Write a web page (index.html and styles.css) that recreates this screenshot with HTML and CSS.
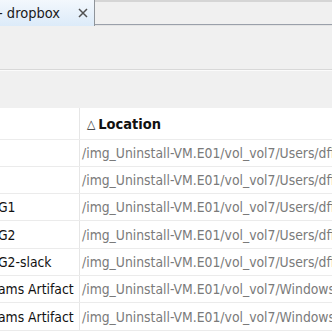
FILE: index.html
```html
<!DOCTYPE html>
<html>
<head>
<meta charset="utf-8">
<link rel="stylesheet" href="styles.css">
</head>
<body>
<div class="tabbar">
  <div class="tab">
    <span class="tab-title">- dropbox</span>
    <svg class="tab-close" width="10" height="10" viewBox="0 0 10 10"><path d="M1 1L9 9M9 1L1 9" stroke="#505050" stroke-width="1.5" fill="none"/></svg>
  </div>
  <div class="tab-rest"></div>
</div>
<div class="toolbar"></div>
<div class="subbar"></div>
<div class="table">
  <div class="row head">
    <div class="cell name"></div>
    <div class="cell loc"><span class="sort">△</span>Location</div>
  </div>
  <div class="row"><div class="cell name"></div><div class="cell loc">/img_Uninstall-VM.E01/vol_vol7/Users/dfir</div></div>
  <div class="row"><div class="cell name"></div><div class="cell loc">/img_Uninstall-VM.E01/vol_vol7/Users/dfir</div></div>
  <div class="row"><div class="cell name">G1</div><div class="cell loc">/img_Uninstall-VM.E01/vol_vol7/Users/dfir</div></div>
  <div class="row"><div class="cell name">G2</div><div class="cell loc">/img_Uninstall-VM.E01/vol_vol7/Users/dfir</div></div>
  <div class="row"><div class="cell name">G2-slack</div><div class="cell loc">/img_Uninstall-VM.E01/vol_vol7/Users/dfir</div></div>
  <div class="row"><div class="cell name">ams Artifact</div><div class="cell loc">/img_Uninstall-VM.E01/vol_vol7/Windows_</div></div>
  <div class="row"><div class="cell name">ams Artifact</div><div class="cell loc">/img_Uninstall-VM.E01/vol_vol7/Windows_</div></div>
</div>
</body>
</html>
```
FILE: styles.css
```css
html, body {
  margin: 0;
  padding: 0;
}
body {
  width: 332px;
  height: 332px;
  overflow: hidden;
  background: #f0f0f0;
  font-family: "DejaVu Sans Condensed", "DejaVu Sans", sans-serif;
  font-size: 13.8px;
  color: #1a1a1a;
}
.tabbar {
  display: flex;
  height: 25px;
}
.tab {
  width: 95px;
  flex: none;
  display: flex;
  align-items: center;
  background: linear-gradient(#f3f8fd, #dcebf9);
  border-right: 1px solid #8f949a;
  box-sizing: border-box;
  height: 26px;
  overflow: hidden;
  white-space: nowrap;
}
.tab-title {
  margin-left: -2px;
  font-size: 14.5px;
  color: #1a1a1a;
  padding-bottom: 1px;
}
.tab-close {
  margin-left: auto;
  margin-right: 6px;
  flex: none;
}
.tab-rest {
  flex: 1;
  border-top: 2px solid #d5d5d5;
  border-bottom: 1px solid #9aa0aa;
  background: #f0f0f0;
  box-sizing: border-box;
  height: 25px;
}
.toolbar {
  height: 43px;
  border-top: 1px solid #e4e4e4;
  border-bottom: 1px solid #d8d8d8;
  background: #f0f0f0;
}
.subbar {
  height: 37px;
  border-top: 1px solid #fbfbfb;
  background: #f0f0f0;
}
.table {
  background: #fff;
  height: 300px;
  overflow: hidden;
}
.row {
  display: flex;
  height: 27.33px;
  border-bottom: 1px solid #ebebeb;
  box-sizing: border-box;
  white-space: nowrap;
}
.row.head {
  height: 31.5px;
  border-bottom: 1px solid #ececec;
}
.cell {
  display: flex;
  align-items: center;
  overflow: hidden;
}
.cell.name {
  width: 79px;
  flex: none;
  border-right: 1px solid #e6e6e6;
  color: #111;
  text-indent: -2px;
}
.cell.loc {
  flex: 1;
  padding-left: 2px;
  color: #7a7a7a;
}
.row.head .cell.loc {
  padding-left: 7px;
  padding-top: 2px;
  font-weight: bold;
  font-size: 14.5px;
  color: #111;
}
.sort {
  font-weight: normal;
  font-size: 12px;
  margin-right: 3px;
  color: #222;
}
```
